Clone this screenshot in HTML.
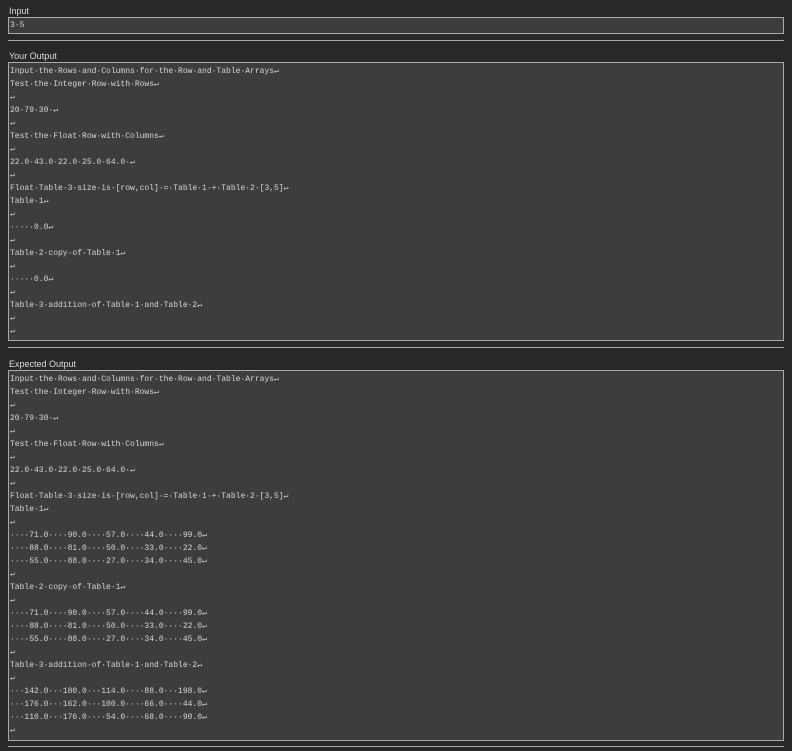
<!DOCTYPE html>
<html><head><style>
body{margin:0;background:#282828;width:792px;height:751px;overflow:hidden;position:relative;font-family:"Liberation Sans",sans-serif}
.lbl{position:absolute;left:9px;font-size:9px;color:#ddd}
.box{position:absolute;left:8px;width:774px;background:#3d3d3d;border:1px solid #aaa;box-sizing:content-box}
.hr{position:absolute;left:8px;width:776px;height:1px;background:#aaa}
pre{margin:0;padding:2px 0 0 1px;font-family:"Liberation Mono",monospace;font-size:8px;line-height:13px;color:#d6d6d6}
</style></head><body>
<div class="lbl" style="top:6px">Input</div>
<div class="box" style="top:17px;height:15px"><pre style="padding-top:1px;line-height:14px">3·5</pre></div>
<div class="hr" style="top:40px"></div>
<div class="lbl" style="top:51px">Your Output</div>
<div class="box" style="top:62px;height:277px"><pre>Input·the·Rows·and·Columns·for·the·Row·and·Table·Arrays↵
Test·the·Integer·Row·with·Rows↵
↵
20·79·30·↵
↵
Test·the·Float·Row·with·Columns↵
↵
22.0·43.0·22.0·25.0·64.0·↵
↵
Float·Table·3·size·is·[row,col]·=·Table·1·+·Table·2·[3,5]↵
Table·1↵
↵
·····0.0↵
↵
Table·2·copy·of·Table·1↵
↵
·····0.0↵
↵
Table·3·addition·of·Table·1·and·Table·2↵
↵
↵</pre></div>
<div class="hr" style="top:347px"></div>
<div class="lbl" style="top:359px">Expected Output</div>
<div class="box" style="top:370px;height:369px"><pre>Input·the·Rows·and·Columns·for·the·Row·and·Table·Arrays↵
Test·the·Integer·Row·with·Rows↵
↵
20·79·30·↵
↵
Test·the·Float·Row·with·Columns↵
↵
22.0·43.0·22.0·25.0·64.0·↵
↵
Float·Table·3·size·is·[row,col]·=·Table·1·+·Table·2·[3,5]↵
Table·1↵
↵
····71.0····90.0····57.0····44.0····99.0↵
····88.0····81.0····50.0····33.0····22.0↵
····55.0····88.0····27.0····34.0····45.0↵
↵
Table·2·copy·of·Table·1↵
↵
····71.0····90.0····57.0····44.0····99.0↵
····88.0····81.0····50.0····33.0····22.0↵
····55.0····88.0····27.0····34.0····45.0↵
↵
Table·3·addition·of·Table·1·and·Table·2↵
↵
···142.0···180.0···114.0····88.0···198.0↵
···176.0···162.0···100.0····66.0····44.0↵
···110.0···176.0····54.0····68.0····90.0↵
↵</pre></div>
<div class="hr" style="top:746px"></div>
</body></html>
